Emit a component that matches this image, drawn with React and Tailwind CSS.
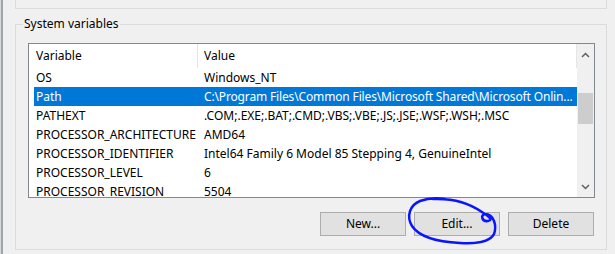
import React from 'react'

const rows = [
  { name: 'OS', value: 'Windows_NT' },
  { name: 'Path', value: 'C:\\Program Files\\Common Files\\Microsoft Shared\\Microsoft Onlin...', selected: true },
  { name: 'PATHEXT', value: '.COM;.EXE;.BAT;.CMD;.VBS;.VBE;.JS;.JSE;.WSF;.WSH;.MSC' },
  { name: 'PROCESSOR_ARCHITECTURE', value: 'AMD64' },
  { name: 'PROCESSOR_IDENTIFIER', value: 'Intel64 Family 6 Model 85 Stepping 4, GenuineIntel' },
  { name: 'PROCESSOR_LEVEL', value: '6' },
  { name: 'PROCESSOR_REVISION', value: '5504' },
]

const Chevron = ({ down }) => (
  <svg width="9" height="6" viewBox="0 0 9 6" className="block">
    <path d={down ? 'M1 1 L4.5 4.5 L8 1' : 'M1 5 L4.5 1.5 L8 5'} fill="none" stroke="#606060" strokeWidth="1.5" />
  </svg>
)

const Button = ({ children }) => (
  <button className="w-[86px] h-[24px] bg-[#e1e1e1] border border-[#adadad] text-[12px] text-black">
    {children}
  </button>
)

export default function App() {
  return (
    <div
      className="relative w-[615px] h-[254px] bg-[#f0f0f0] overflow-hidden flex"
      style={{ fontFamily: '"Noto Sans", sans-serif' }}
    >
      {/* window edge */}
      <div className="w-[1px] bg-[#dadada]" />
      <div className="w-[2px] bg-[#a0a5ad]" />

      <div className="pl-[12px]">
        {/* previous group box (cut off at top) */}
        <div className="w-[592px] h-[9px] border-x border-b border-[#dcdcdc]" />

        <fieldset className="mt-[7px] w-[592px] h-[234px] border border-[#dcdcdc] pl-[12px] pt-[11px]">
          <legend className="-ml-[5px] px-[1px] text-[12px] leading-[16px] text-black">System variables</legend>

          <div className="w-[567px] h-[155px] border border-[#828790] bg-white flex">
            <div className="w-[548px] overflow-hidden">
              {/* header */}
              <div className="h-[24px] flex text-[12px] text-black border-r border-[#e5e5e5]">
                <div className="w-[169px] pl-[7px] flex items-center border-r border-[#e5e5e5]">Variable</div>
                <div className="pl-[6px] flex items-center">Value</div>
              </div>
              {rows.map(r => (
                <div key={r.name} className="h-[19px] flex pl-[5px] text-[12px]">
                  <div className={`flex w-full ${r.selected ? 'bg-[#0078d7] text-white tracking-[-0.15px]' : 'text-black'}`}>
                    <div className="w-[164px] pl-[2px] flex items-center whitespace-nowrap tracking-normal">{r.name}</div>
                    <div className="flex-1 min-w-0 pl-[6px] flex items-center whitespace-nowrap">{r.value}</div>
                  </div>
                </div>
              ))}
            </div>

            {/* scrollbar */}
            <div className="w-[17px] bg-[#f0f0f0] flex flex-col items-center">
              <div className="h-[20px] flex items-center justify-center pt-[1px]">
                <Chevron />
              </div>
              <div className="mt-[29px] w-[15px] h-[31px] bg-[#cdcdcd]" />
              <div className="flex-1" />
              <div className="h-[20px] flex items-center justify-center">
                <Chevron down />
              </div>
            </div>
          </div>

          <div className="w-[567px] mt-[14px] flex justify-end gap-[8px] pr-[1px]">
            <Button>New...</Button>
            <Button>Edit...</Button>
            <Button>Delete</Button>
          </div>
        </fieldset>
      </div>

      {/* hand-drawn annotation */}
      <svg className="absolute inset-0 pointer-events-none" width="615" height="254" viewBox="0 0 615 254">
        <path
          d="M433 199 C455 198, 472 205, 482 212 C488 216, 494 220, 488 221 C482 222, 480 215, 485 214 C494 214, 497 226, 494 234 C490 242, 475 244, 460 243 C440 242, 420 238, 412 226 C406 216, 410 205, 420 201 C428 198, 438 198, 445 199"
          fill="none"
          stroke="#0a14ff"
          strokeWidth="2.5"
          strokeLinecap="round"
        />
      </svg>
    </div>
  )
}
